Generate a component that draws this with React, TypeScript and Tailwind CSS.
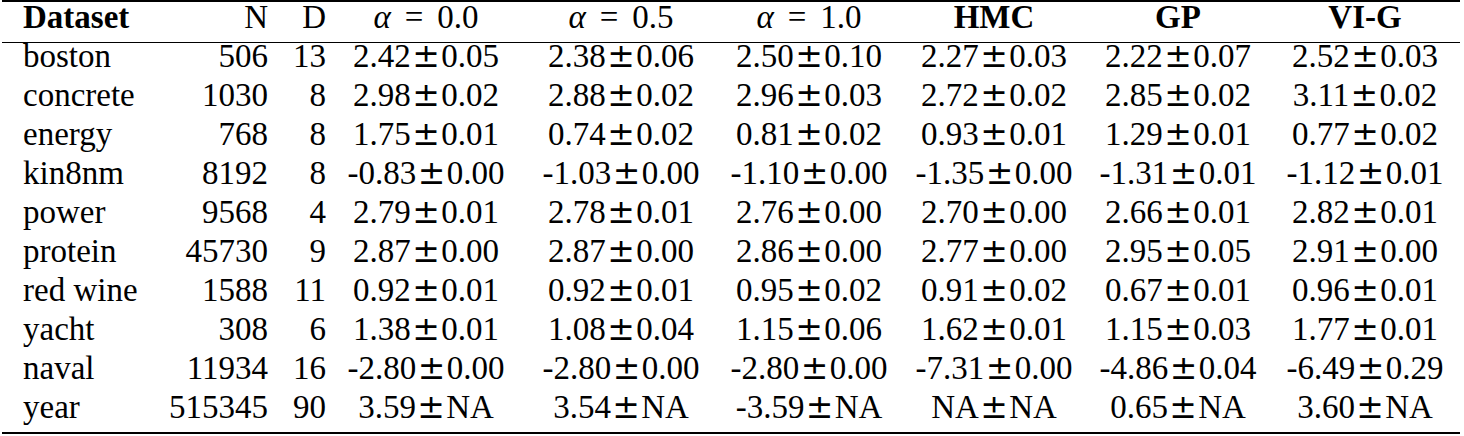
import { Fragment } from "react";

type Row = {
  name: string;
  n: string;
  d: string;
  vals: [string, string][];
};

const rows: Row[] = [
  { name: "boston", n: "506", d: "13", vals: [["2.42", "0.05"], ["2.38", "0.06"], ["2.50", "0.10"], ["2.27", "0.03"], ["2.22", "0.07"], ["2.52", "0.03"]] },
  { name: "concrete", n: "1030", d: "8", vals: [["2.98", "0.02"], ["2.88", "0.02"], ["2.96", "0.03"], ["2.72", "0.02"], ["2.85", "0.02"], ["3.11", "0.02"]] },
  { name: "energy", n: "768", d: "8", vals: [["1.75", "0.01"], ["0.74", "0.02"], ["0.81", "0.02"], ["0.93", "0.01"], ["1.29", "0.01"], ["0.77", "0.02"]] },
  { name: "kin8nm", n: "8192", d: "8", vals: [["-0.83", "0.00"], ["-1.03", "0.00"], ["-1.10", "0.00"], ["-1.35", "0.00"], ["-1.31", "0.01"], ["-1.12", "0.01"]] },
  { name: "power", n: "9568", d: "4", vals: [["2.79", "0.01"], ["2.78", "0.01"], ["2.76", "0.00"], ["2.70", "0.00"], ["2.66", "0.01"], ["2.82", "0.01"]] },
  { name: "protein", n: "45730", d: "9", vals: [["2.87", "0.00"], ["2.87", "0.00"], ["2.86", "0.00"], ["2.77", "0.00"], ["2.95", "0.05"], ["2.91", "0.00"]] },
  { name: "red wine", n: "1588", d: "11", vals: [["0.92", "0.01"], ["0.92", "0.01"], ["0.95", "0.02"], ["0.91", "0.02"], ["0.67", "0.01"], ["0.96", "0.01"]] },
  { name: "yacht", n: "308", d: "6", vals: [["1.38", "0.01"], ["1.08", "0.04"], ["1.15", "0.06"], ["1.62", "0.01"], ["1.15", "0.03"], ["1.77", "0.01"]] },
  { name: "naval", n: "11934", d: "16", vals: [["-2.80", "0.00"], ["-2.80", "0.00"], ["-2.80", "0.00"], ["-7.31", "0.00"], ["-4.86", "0.04"], ["-6.49", "0.29"]] },
  { name: "year", n: "515345", d: "90", vals: [["3.59", "NA"], ["3.54", "NA"], ["-3.59", "NA"], ["NA", "NA"], ["0.65", "NA"], ["3.60", "NA"]] },
];

const cols =
  "grid grid-cols-[158px_108px_58px_200px_190px_186px_184px_184px_190px]";

// alpha = x header cell, math style
const Alpha = ({ v }: { v: string }) => (
  <div className="text-center">
    <span className="italic">α</span>
    <span className="mx-[0.42em]">=</span>
    {v}
  </div>
);

const Pm = ({ m, s }: { m: string; s: string }) => (
  <div className="text-center">
    {m}
    <span className="mx-[0.04em] font-['DejaVu_Serif',serif]">±</span>
    {s}
  </div>
);

export default function App() {
  return (
    <div className="h-[436px] w-[1464px] bg-white font-['Liberation_Serif',serif] text-[33px] text-black">
      <div className="ml-[2px] w-[1458px]">
        {/* top rule */}
        <div className="h-[2px] bg-black"></div>
        {/* header */}
        <div className={`${cols} h-[40px] leading-[30px]`}>
          <div className="pl-[21px] font-bold">Dataset</div>
          <div className="text-right">N</div>
          <div className="text-right">D</div>
          <Alpha v="0.0" />
          <Alpha v="0.5" />
          <Alpha v="1.0" />
          <div className="text-center font-bold">HMC</div>
          <div className="text-center font-bold">GP</div>
          <div className="text-center font-bold">VI-G</div>
        </div>
        {/* mid rule */}
        <div className="h-px bg-black"></div>
        {rows.map((r, i) => (
          <div
            key={r.name}
            className={`${cols} leading-[26px] ${
              i === rows.length - 1 ? "pb-[12px]" : "pb-[13px]"
            }`}
          >
            <div className="pl-[21px]">{r.name}</div>
            <div className="text-right">{r.n}</div>
            <div className="text-right">{r.d}</div>
            {r.vals.map(([m, s], j) => (
              <Fragment key={j}>
                <Pm m={m} s={s} />
              </Fragment>
            ))}
          </div>
        ))}
        {/* bottom rule */}
        <div className="h-[2px] bg-black"></div>
      </div>
    </div>
  );
}
